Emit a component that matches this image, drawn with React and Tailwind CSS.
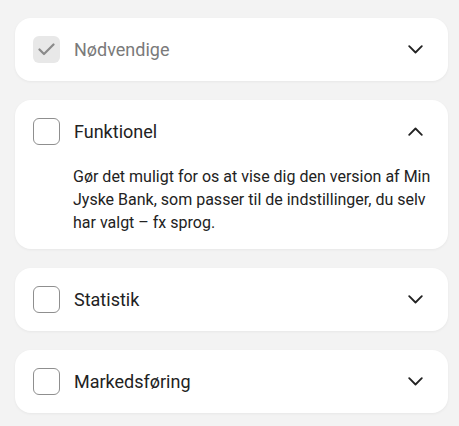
import { useState } from 'react';

const categories = [
  { id: 'necessary', label: 'Nødvendige', locked: true },
  {
    id: 'functional',
    label: 'Funktionel',
    text: 'Gør det muligt for os at vise dig den version af Min Jyske Bank, som passer til de indstillinger, du selv har valgt – fx sprog.',
  },
  { id: 'statistics', label: 'Statistik' },
  { id: 'marketing', label: 'Markedsføring' },
];

function Chevron({ up }) {
  return (
    <svg width="15" height="9" viewBox="0 0 15 9" fill="none" className={up ? 'rotate-180' : ''}>
      <path d="M1.2 1.2L7.5 7.5L13.8 1.2" stroke="#222" strokeWidth="1.8" strokeLinecap="round" strokeLinejoin="round" />
    </svg>
  );
}

function Checkbox({ checked, locked }) {
  if (locked) {
    return (
      <span className="flex h-[27px] w-[27px] shrink-0 items-center justify-center rounded-[6px] bg-[#e8e8e8]">
        <svg width="17" height="13" viewBox="0 0 17 13" fill="none">
          <path d="M1.5 6.5L6 11L15.5 1.5" stroke="#8a8a8a" strokeWidth="2.2" strokeLinecap="round" strokeLinejoin="round" />
        </svg>
      </span>
    );
  }
  return (
    <span className="flex h-[27px] w-[27px] shrink-0 items-center justify-center rounded-[6px] border-[1.5px] border-[#8f8f8f] bg-white">
      {checked && (
        <svg width="17" height="13" viewBox="0 0 17 13" fill="none">
          <path d="M1.5 6.5L6 11L15.5 1.5" stroke="#222" strokeWidth="2.2" strokeLinecap="round" strokeLinejoin="round" />
        </svg>
      )}
    </span>
  );
}

export default function App() {
  const [open, setOpen] = useState('functional');
  const [checked, setChecked] = useState({});

  return (
    <div className="min-h-screen bg-[#f3f3f3] pt-[18px] pr-[11px] pb-4 pl-[15px] font-['Roboto',sans-serif]">
      <div className="flex flex-col gap-[19px]">
        {categories.map((c) => {
          const isOpen = open === c.id;
          return (
            <div key={c.id} className="rounded-[16px] bg-white shadow-[0_1px_3px_rgba(0,0,0,0.05)]">
              <div className="flex h-[63px] items-center pl-[18px] pr-[25px]">
                <button
                  type="button"
                  onClick={() => !c.locked && setChecked({ ...checked, [c.id]: !checked[c.id] })}
                >
                  <Checkbox checked={checked[c.id]} locked={c.locked} />
                </button>
                <span className={`ml-[14px] flex-1 text-[18px] ${c.locked ? 'text-[#7a7a7a]' : 'text-[#222]'}`}>
                  {c.label}
                </span>
                <button type="button" onClick={() => setOpen(isOpen ? null : c.id)}>
                  <Chevron up={isOpen} />
                </button>
              </div>
              {isOpen && c.text && (
                <p className="pt-[2px] pr-[12px] pb-[15px] pl-[58px] text-[16px] leading-[23px] text-[#222]">{c.text}</p>
              )}
            </div>
          );
        })}
      </div>
    </div>
  );
}
